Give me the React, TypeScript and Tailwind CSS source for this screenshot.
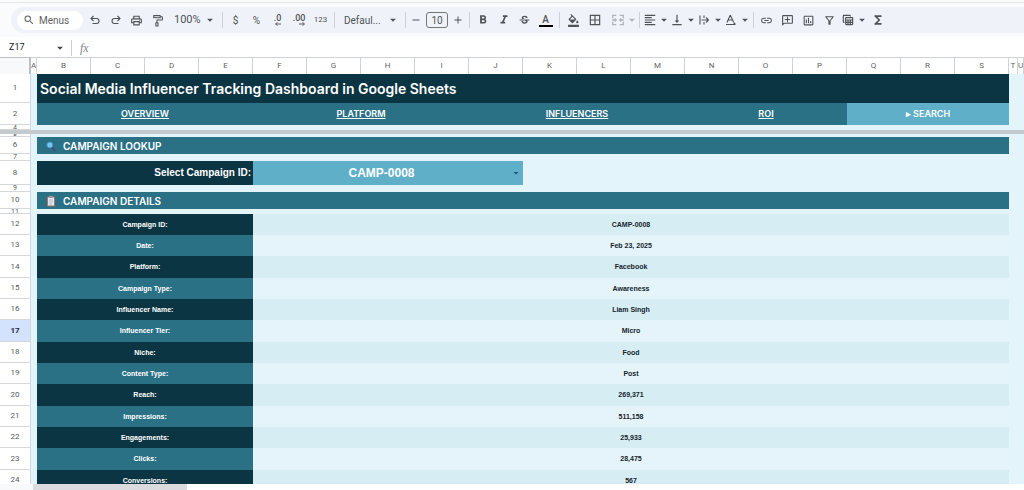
import type { ReactNode } from 'react'
import clsx from 'clsx'
import {
    MdArrowDropDown,
    MdAdd,
    MdBorderAll,
    MdFormatAlignLeft,
    MdFormatBold,
    MdFormatColorFill,
    MdFormatItalic,
    MdFunctions,
    MdLink,
    MdOutlineAddComment,
    MdOutlineFilterAlt,
    MdOutlineImagesearchRoller,
    MdOutlineInsertChart,
    MdOutlinePrint,
    MdOutlineTableView,
    MdRemove,
    MdSearch,
    MdStrikethroughS,
    MdVerticalAlignBottom,
} from 'react-icons/md'

const columns = 'ABCDEFGHIJKLMNOPQRSTU'.split('')

const tabs = [
    { label: 'OVERVIEW', span: 4 },
    { label: 'PLATFORM', span: 4 },
    { label: 'INFLUENCERS', span: 4 },
    { label: 'ROI', span: 3 },
]

const details = [
    ['Campaign ID:', 'CAMP-0008'],
    ['Date:', 'Feb 23, 2025'],
    ['Platform:', 'Facebook'],
    ['Campaign Type:', 'Awareness'],
    ['Influencer Name:', 'Liam Singh'],
    ['Influencer Tier:', 'Micro'],
    ['Niche:', 'Food'],
    ['Content Type:', 'Post'],
    ['Reach:', '269,371'],
    ['Impressions:', '511,158'],
    ['Engagements:', '25,933'],
    ['Clicks:', '28,475'],
    ['Conversions:', '567'],
]

function Divider() {
    return (
        <span className="flex h-4 w-1.5 shrink-0 justify-center">
            <span className="h-full w-px bg-[#cdd1d6]" />
        </span>
    )
}

function Tool({ label, className = 'w-[21px]', children }: { label: string; className?: string; children: ReactNode }) {
    return (
        <button type="button" aria-label={label} className={clsx('flex h-5 shrink-0 items-center justify-center', className)}>
            {children}
        </button>
    )
}

function MenuTool({ label, className = 'w-[27px]', children }: { label: string; className?: string; children: ReactNode }) {
    return (
        <button type="button" aria-label={label} className={clsx('flex h-5 shrink-0 items-center', className)}>
            <span className="flex w-4 shrink-0 justify-center">{children}</span>
            <MdArrowDropDown className="-ml-px size-3.5 shrink-0" />
        </button>
    )
}

function StrokeIcon({ className = 'size-3', children }: { className?: string; children: ReactNode }) {
    return (
        <svg viewBox="0 0 24 24" className={className} fill="none" stroke="currentColor" strokeWidth="2.2">
            {children}
        </svg>
    )
}

function DecimalIcon({ digits, right }: { digits: string; right?: boolean }) {
    return (
        <span className="flex flex-col items-end text-[9px] leading-[8px] font-medium">
            {digits}
            <svg viewBox="0 0 10 6" className="h-1 w-1.5" fill="none" stroke="currentColor" strokeWidth="1.6">
                <path d={right ? 'M0 3h9M6 0l3 3-3 3' : 'M10 3H1M4 0L1 3l3 3'} />
            </svg>
        </span>
    )
}

function Toolbar() {
    return (
        <div className="ml-[11px] flex h-[26px] items-center rounded-l-full bg-[#eff3f9] pl-1.5 text-[#505356]">
            <button type="button" className="flex h-[19px] w-[66px] shrink-0 items-center gap-1 rounded-full bg-white pl-1.5 text-[10px] text-[#5f6265]">
                <MdSearch className="size-3" />
                Menus
            </button>
            <div className="ml-px flex shrink-0">
                <Tool label="Undo">
                    <StrokeIcon>
                        <path d="M9 4L4 9l5 5M4 9h11a4.500 4.500 0 010 10H7" />
                    </StrokeIcon>
                </Tool>
                <Tool label="Redo">
                    <StrokeIcon>
                        <path d="M15 4l5 5-5 5M20 9H9a4.500 4.500 0 000 10h8" />
                    </StrokeIcon>
                </Tool>
                <Tool label="Print">
                    <MdOutlinePrint className="size-[13px]" />
                </Tool>
                <Tool label="Paint format">
                    <MdOutlineImagesearchRoller className="size-[13px] -scale-x-100" />
                </Tool>
            </div>
            <button type="button" className="flex w-[51px] shrink-0 items-center justify-between pl-1.5 text-[11px]">
                100%
                <MdArrowDropDown className="mr-0.5 size-3.5" />
            </button>
            <Divider />
            <Tool label="Currency"><span className="text-[10px]">$</span></Tool>
            <Tool label="Percent"><span className="text-[10px]">%</span></Tool>
            <Tool label="Decrease decimals"><DecimalIcon digits=".0" /></Tool>
            <Tool label="Increase decimals" className="w-[22px]"><DecimalIcon digits=".00" right /></Tool>
            <Tool label="More formats"><span className="text-[8px]">123</span></Tool>
            <Divider />
            <button type="button" className="flex w-[65px] shrink-0 items-center justify-between pl-[7px] text-[10px]">
                Defaul...
                <MdArrowDropDown className="mr-0.5 size-3.5" />
            </button>
            <Divider />
            <Tool label="Decrease font size" className="w-4"><MdRemove className="size-3" /></Tool>
            <input
                aria-label="Font size"
                defaultValue="10"
                className="mx-0.5 h-4 w-[22px] shrink-0 rounded-[3px] border border-[#747775] text-center text-[10px]"
            />
            <Tool label="Increase font size" className="w-4"><MdAdd className="size-3" /></Tool>
            <Divider />
            <Tool label="Bold"><MdFormatBold className="size-3.5" /></Tool>
            <Tool label="Italic"><MdFormatItalic className="size-3.5" /></Tool>
            <Tool label="Strikethrough"><MdStrikethroughS className="size-[13px]" /></Tool>
            <Tool label="Text color">
                <span className="w-3.5 border-b-2 border-black text-center text-[10px] leading-[11px] font-medium">A</span>
            </Tool>
            <Divider />
            <Tool label="Fill color" className="w-[22px]"><MdFormatColorFill className="size-[13px]" /></Tool>
            <Tool label="Borders" className="w-[22px]"><MdBorderAll className="size-3.5" /></Tool>
            <span className="flex w-[30px] shrink-0 pl-1 text-[#b0b3b6]">
                <MenuTool label="Merge cells">
                    <StrokeIcon className="size-3.5">
                        <path d="M9 4H3v5M3 15v5h6M15 4h6v5M21 15v5h-6M2 12h7M6.500 9.500L9 12l-2.500 2.500M22 12h-7M17.500 9.500L15 12l2.500 2.500" />
                    </StrokeIcon>
                </MenuTool>
            </span>
            <Divider />
            <MenuTool label="Horizontal align"><MdFormatAlignLeft className="size-3.5" /></MenuTool>
            <MenuTool label="Vertical align"><MdVerticalAlignBottom className="size-3.5" /></MenuTool>
            <MenuTool label="Text wrapping">
                <StrokeIcon>
                    <path d="M4 3v18M12 3v5M12 16v5M7 12h14M16 7l5 5-5 5" />
                </StrokeIcon>
            </MenuTool>
            <MenuTool label="Text rotation">
                <StrokeIcon>
                    <path d="M4 17L10 3h1l6 13M6.500 12h8M2 21h18M17 17l4 4" />
                </StrokeIcon>
            </MenuTool>
            <Divider />
            <Tool label="Insert link"><MdLink className="size-[13px]" /></Tool>
            <Tool label="Insert comment"><MdOutlineAddComment className="size-[13px] -scale-x-100" /></Tool>
            <Tool label="Insert chart"><MdOutlineInsertChart className="size-[13px]" /></Tool>
            <Tool label="Create a filter"><MdOutlineFilterAlt className="size-[13px]" /></Tool>
            <MenuTool label="Table views"><MdOutlineTableView className="size-3.5" /></MenuTool>
            <Tool label="Functions"><MdFunctions className="size-3.5" /></Tool>
        </div>
    )
}

function FormulaBar() {
    return (
        <div className="flex h-5 shrink-0 items-center bg-white pt-px text-[#444746]">
            <input aria-label="Name box" defaultValue="Z17" className="w-11 pl-[9px] text-[9px] text-[#202124]" />
            <button type="button" aria-label="Named ranges" className="flex w-6 justify-end">
                <MdArrowDropDown className="mr-px size-3.5" />
            </button>
            <Divider />
            <span className="pl-1.5 font-['Liberation_Serif',serif] text-[12px] leading-4 text-[#80868b] italic">fx</span>
        </div>
    )
}

function RowNumber({ n, active }: { n: number; active?: boolean }) {
    return (
        <th
            scope="row"
            className={clsx(
                'border-r border-b border-[#d5d8db] p-0 font-[Roboto,sans-serif] text-[8px] leading-[10px]',
                active ? 'bg-[#d3e3fd] font-bold text-[#1f2a44]' : 'bg-white font-normal text-[#575b5f]',
            )}
        >
            {n}
        </th>
    )
}

// Thin rows: the number is cut off where the row is lower than the digit
function SpacerRow({ n, className, inner }: { n: number; className: string; inner: string }) {
    return (
        <tr className={className}>
            <th scope="row" className="border-r border-b border-[#d5d8db] bg-white p-0 font-[Roboto,sans-serif] font-normal">
                <div className={clsx('overflow-hidden text-[7px] leading-[6px] text-[#575b5f]', inner)}>{n}</div>
            </th>
            <td colSpan={21} className="p-0" />
        </tr>
    )
}

function SectionRow({ n, icon, title }: { n: number; icon: ReactNode; title: string }) {
    return (
        <tr className="h-[17px]">
            <RowNumber n={n} />
            <td className="p-0" />
            <td colSpan={18} className="bg-[#2b7186] p-0">
                <h2 className="flex items-center gap-1.5 pl-2 font-[Inter,sans-serif] text-[10px] leading-[16px] font-semibold text-white">
                    {icon}
                    {title}
                </h2>
            </td>
            <td colSpan={2} className="p-0" />
        </tr>
    )
}

function Sheet() {
    return (
        <table className="w-full table-fixed border-separate border-spacing-0 bg-[#e3f4fa]">
            <colgroup>
                <col className="w-[31px]" />
                <col className="w-1.5" />
                <col span={18} />
                <col className="w-[9px]" />
                <col className="w-1.5" />
            </colgroup>
            <thead>
                <tr className="h-[17px] bg-white font-[Roboto,sans-serif] text-[8px] leading-[10px] text-[#5f6368]">
                    <td className="border-t border-r-2 border-[#bdc1c6] bg-[#f8f9fa] p-0" />
                    {columns.map((c) => (
                        <th key={c} scope="col" className="overflow-hidden border-t border-r border-[#d0d3d6] p-0 font-normal">
                            {c}
                        </th>
                    ))}
                </tr>
            </thead>
            <tbody>
                <tr className="h-[29px]">
                    <RowNumber n={1} />
                    <td className="p-0" />
                    <td colSpan={18} className="bg-[#0c3543] p-0 pl-[3px]">
                        <h1 className="font-[Inter,sans-serif] text-[14px] leading-5 font-semibold text-white">
                            Social Media Influencer Tracking Dashboard in Google Sheets
                        </h1>
                    </td>
                    <td colSpan={2} className="p-0" />
                </tr>
                <tr className="h-[22px] font-[Inter,sans-serif] text-[9px] leading-3 font-semibold text-white">
                    <RowNumber n={2} />
                    <td className="p-0" />
                    {tabs.map((tab) => (
                        <td key={tab.label} colSpan={tab.span} className="bg-[#2b7186] p-0 text-center">
                            <a href="#" className="underline">{tab.label}</a>
                        </td>
                    ))}
                    <td colSpan={3} className="bg-[#5fafc9] p-0 text-center">
                        <a href="#">▸ SEARCH</a>
                    </td>
                    <td colSpan={2} className="p-0" />
                </tr>
                <SpacerRow n={4} className="h-[5px]" inner="h-1" />
                {/* Frozen rows end here */}
                <tr className="h-1">
                    <td colSpan={22} className="bg-[#c3c9cc] p-0" />
                </tr>
                <SpacerRow n={5} className="h-[3px]" inner="h-[2px]" />
                <SectionRow
                    n={6}
                    title="CAMPAIGN LOOKUP"
                    icon={
                        <svg viewBox="0 0 12 12" className="size-3">
                            <path d="M6.500 7l3.200 3.200" stroke="#454a78" strokeWidth="2" strokeLinecap="round" />
                            <circle cx="4.800" cy="5" r="3" fill="#74c8f5" stroke="#3f86b5" strokeWidth="0.800" />
                        </svg>
                    }
                />
                <SpacerRow n={7} className="h-[7px]" inner="h-[6px]" />
                <tr className="h-6">
                    <RowNumber n={8} />
                    <td className="p-0" />
                    <td colSpan={4} className="bg-[#0c3543] p-0 pr-[2px] text-right text-[10px] leading-4 font-bold text-white">
                        <label htmlFor="campaign">Select Campaign ID:</label>
                    </td>
                    <td colSpan={5} className="bg-[#5fafc9] p-0">
                        <div className="flex items-center pr-px">
                            <select
                                id="campaign"
                                className="h-5 min-w-0 flex-1 appearance-none bg-transparent text-center text-[12px] font-bold text-white [text-align-last:center]"
                            >
                                <option>CAMP-0008</option>
                            </select>
                            <MdArrowDropDown className="size-3 text-[#1d5a70]" />
                        </div>
                    </td>
                    <td colSpan={11} className="p-0" />
                </tr>
                <SpacerRow n={9} className="h-[7px]" inner="h-[6px]" />
                <SectionRow
                    n={10}
                    title="CAMPAIGN DETAILS"
                    icon={
                        <svg viewBox="0 0 12 12" className="size-3">
                            <rect x="2" y="1.500" width="8" height="10" rx="0.800" fill="#a8746b" />
                            <rect x="3" y="2.500" width="6" height="8" fill="#e2e6ee" />
                            <rect x="4" y="0.800" width="4" height="2" fill="#8f98a5" />
                            <path d="M4 5h4M4 7h4M4 9h3" stroke="#a9b0bd" strokeWidth="0.700" />
                        </svg>
                    }
                />
                <SpacerRow n={11} className="h-[5px]" inner="h-1" />
                {details.map(([label, value], i) => (
                    <tr key={label} className={clsx('text-[7px] leading-[10px] font-bold', i % 3 === 2 ? 'h-[22px]' : 'h-[21px]')}>
                        <RowNumber n={i + 12} active={i + 12 === 17} />
                        <td className="p-0" />
                        <td colSpan={4} className={clsx('p-0 text-center text-white', i % 2 ? 'bg-[#2b7186]' : 'bg-[#0c3543]')}>
                            {label}
                        </td>
                        <td colSpan={14} className={clsx('p-0 text-center text-[#15242b]', i % 2 ? 'bg-[#e4f4fa]' : 'bg-[#d6edf4]')}>
                            {value}
                        </td>
                        <td colSpan={2} className="p-0" />
                    </tr>
                ))}
            </tbody>
        </table>
    )
}

export default function App() {
    return (
        <div className="flex h-screen flex-col overflow-hidden bg-white font-['Liberation_Sans',Arial,sans-serif]">
            <header className="shrink-0 bg-[#f9fbfd] pb-1 font-[Roboto,sans-serif]">
                <div className="mb-1 h-[3px] border-b border-[#e6e7e9]" />
                <Toolbar />
            </header>
            <div className="shrink-0 font-[Roboto,sans-serif]">
                <FormulaBar />
            </div>
            <main className="min-h-0 flex-1 overflow-hidden">
                <Sheet />
            </main>
            <footer className="flex h-[6px] shrink-0 bg-[#f8f9fa] pl-[33px]">
                <div className="h-full w-[154px] bg-[#d9dbde]" />
                <div className="flex-1 bg-white" />
            </footer>
        </div>
    )
}
